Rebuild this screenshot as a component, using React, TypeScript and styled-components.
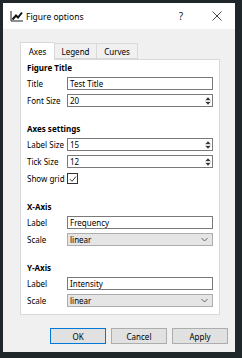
import { FC } from 'react'
import styled, { createGlobalStyle } from 'styled-components'

const GlobalStyle = createGlobalStyle`
    html, body {
        margin: 0;
        padding: 0;
        background: #20272b;
    }
    body {
        font-family: "Noto Sans", "Liberation Sans", sans-serif;
        font-size: 8px;
        color: #000;
    }
`

const Screen = styled.div`
    width: 242px;
    height: 358px;
    box-sizing: border-box;
    padding: 3px 7px 6px 3px;
`

const Window = styled.div`
    width: 232px;
    height: 349px;
    display: flex;
    flex-direction: column;
    background: #f0f0f0;
`

const TitleBar = styled.div`
    height: 26px;
    flex-shrink: 0;
    background: #fff;
    display: flex;
    align-items: center;
    padding: 0 0 0 7px;
`

const TitleText = styled.span`
    font-size: 8.5px;
    margin-left: 2px;
    flex-grow: 1;
`

const TitleButton = styled.div`
    width: 36px;
    height: 26px;
    display: flex;
    justify-content: center;
    align-items: center;
    font-size: 10px;
    color: #222;
`

const Body = styled.div`
    flex-grow: 1;
    display: flex;
    flex-direction: column;
    padding: 13px 7px 8px 17px;
`

const TabBar = styled.div`
    display: flex;
    align-items: flex-end;
    height: 17px;
    position: relative;
    z-index: 1;
`

interface iTab {
    active?: boolean;
    width: number;
}

const Tab = styled.div<iTab>`
    width: ${props => props.width}px;
    box-sizing: border-box;
    height: ${props => props.active ? 18 : 16}px;
    margin-bottom: ${props => props.active ? -1 : 0}px;
    background: ${props => props.active ? '#fff' : '#f0f0f0'};
    border: 1px solid #d9d9d9;
    border-bottom: ${props => props.active ? 'none' : '1px solid #d9d9d9'};
    margin-left: ${props => props.active ? 0 : -1}px;
    display: flex;
    justify-content: center;
    align-items: center;
`

const Panel = styled.div`
    width: 200px;
    height: 256px;
    box-sizing: border-box;
    background: #fff;
    border: 1px solid #d9d9d9;
    padding: 2px 6px 7px 6px;
    display: flex;
    flex-direction: column;
    gap: 16px;
`

const Section = styled.div`
    display: flex;
    flex-direction: column;
    gap: 4px;
`

const SectionTitle = styled.div`
    font-weight: bold;
    line-height: 12px;
    margin-bottom: -1px;
`

const Row = styled.div`
    display: flex;
    align-items: center;
    height: 13px;
`

const Label = styled.div`
    width: 40px;
    flex-shrink: 0;
`

const Field = styled.div`
    width: 146px;
    height: 13px;
    box-sizing: border-box;
    border: 1px solid #7a7a7a;
    background: #fff;
    display: flex;
    align-items: center;
    padding-left: 2px;
`

const FieldText = styled.span`
    flex-grow: 1;
`

const Spin = styled.div`
    width: 9px;
    height: 11px;
    display: flex;
    justify-content: center;
    align-items: center;
`

const Combo = styled(Field)`
    background: #e5e5e5;
    border-color: #adadad;
`

const Check = styled.div`
    width: 11px;
    height: 11px;
    box-sizing: border-box;
    border: 1px solid #333;
    background: #fff;
    display: flex;
    justify-content: center;
    align-items: center;
`

const ButtonRow = styled.div`
    display: flex;
    justify-content: flex-end;
    gap: 5px;
    margin-top: 13px;
`

interface iButton {
    primary?: boolean;
}

const Button = styled.div<iButton>`
    width: 56px;
    height: 16px;
    box-sizing: border-box;
    background: #e1e1e1;
    border: 1px solid ${props => props.primary ? '#0078d7' : '#adadad'};
    display: flex;
    justify-content: center;
    align-items: center;
`

const ChartIcon = () => (
    <svg width="14" height="12" viewBox="0 0 14 12">
        <path d="M1 1V11H13" stroke="#222" strokeWidth="1" fill="none" />
        <path d="M2.5 9.5L6 5.5L8 7.5L12 2.5" stroke="#111" strokeWidth="2" fill="none" />
    </svg>
)

const CloseIcon = () => (
    <svg width="10" height="10" viewBox="0 0 10 10">
        <path d="M0.5 0.5L9.5 9.5M9.5 0.5L0.5 9.5" stroke="#333" strokeWidth="0.9" />
    </svg>
)

const SpinArrows = () => (
    <svg width="6" height="10" viewBox="0 0 6 10">
        <path d="M0.5 4L3 1.2L5.5 4Z" fill="#333" />
        <path d="M0 5H6" stroke="#999" strokeWidth="0.6" />
        <path d="M0.5 6L3 8.8L5.5 6Z" fill="#333" />
    </svg>
)

const Chevron = () => (
    <svg width="7" height="5" viewBox="0 0 7 5">
        <path d="M0.5 1L3.5 4L6.5 1" stroke="#444" strokeWidth="0.8" fill="none" />
    </svg>
)

const Tick = () => (
    <svg width="8" height="8" viewBox="0 0 8 8">
        <path d="M1 4.2L3 6.3L7 1.5" stroke="#222" strokeWidth="0.9" fill="none" />
    </svg>
)

interface iInput {
    label: string;
    value: string;
    kind?: 'text' | 'spin' | 'combo';
}

const Input: FC<iInput> = ({ label, value, kind = 'text' }) => (
    <Row>
        <Label>{label}</Label>
        {kind === 'combo' ? (
            <Combo>
                <FieldText>{value}</FieldText>
                <Spin><Chevron /></Spin>
                <div style={{ width: 3 }} />
            </Combo>
        ) : (
            <Field>
                <FieldText>{value}</FieldText>
                {kind === 'spin' && <Spin><SpinArrows /></Spin>}
            </Field>
        )}
    </Row>
)

const App: FC = () => {
    return (
        <Screen>
            <GlobalStyle />
            <Window>
                <TitleBar>
                    <ChartIcon />
                    <TitleText>Figure options</TitleText>
                    <TitleButton>?</TitleButton>
                    <TitleButton><CloseIcon /></TitleButton>
                </TitleBar>
                <Body>
                    <TabBar>
                        <Tab active width={35}>Axes</Tab>
                        <Tab width={43}>Legend</Tab>
                        <Tab width={42}>Curves</Tab>
                    </TabBar>
                    <Panel>
                        <Section>
                            <SectionTitle>Figure Title</SectionTitle>
                            <Input label="Title" value="Test Title" />
                            <Input label="Font Size" value="20" kind="spin" />
                        </Section>
                        <Section>
                            <SectionTitle>Axes settings</SectionTitle>
                            <Input label="Label Size" value="15" kind="spin" />
                            <Input label="Tick Size" value="12" kind="spin" />
                            <Row>
                                <Label>Show grid</Label>
                                <Check><Tick /></Check>
                            </Row>
                        </Section>
                        <Section>
                            <SectionTitle>X-Axis</SectionTitle>
                            <Input label="Label" value="Frequency" />
                            <Input label="Scale" value="linear" kind="combo" />
                        </Section>
                        <Section>
                            <SectionTitle>Y-Axis</SectionTitle>
                            <Input label="Label" value="Intensity" />
                            <Input label="Scale" value="linear" kind="combo" />
                        </Section>
                    </Panel>
                    <ButtonRow>
                        <Button primary>OK</Button>
                        <Button>Cancel</Button>
                        <Button>Apply</Button>
                    </ButtonRow>
                </Body>
            </Window>
        </Screen>
    )
}

export default App
